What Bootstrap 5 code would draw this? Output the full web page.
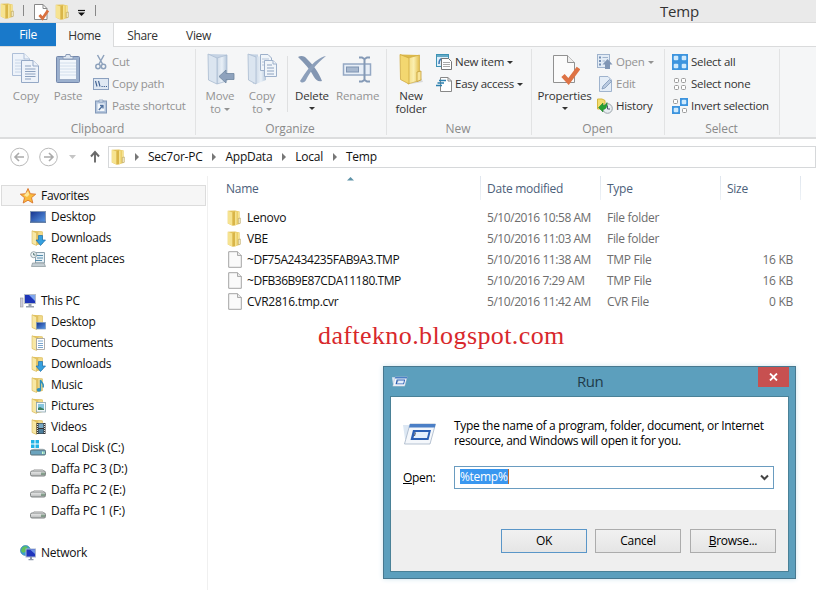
<!DOCTYPE html>
<html lang="en">
<head>
<meta charset="utf-8">
<meta name="viewport" content="width=device-width, initial-scale=1">
<title>Temp</title>
<link href="https://cdn.jsdelivr.net/npm/bootstrap@5.3.0/dist/css/bootstrap.min.css" rel="stylesheet">
<style>
body{width:816px;height:590px;overflow:hidden;background:#fff;color:#111;font:12px/16px "Open Sans","Noto Sans",sans-serif;letter-spacing:-.3px;position:relative;white-space:nowrap}
svg{display:block;flex:none}
.title-bar{height:23px;background:#eaeaea;border-bottom:1px solid #dadada}
.title-text{font-size:15px;line-height:23px;color:#333;margin-left:562px;letter-spacing:-.2px}
.tab-bar{height:24px;border-bottom:1px solid #dadbdc}
.tab-bar .tab-item{font-size:12px;color:#333;line-height:26px;text-align:center;letter-spacing:-.35px}
.tab-bar .tab-file{width:56px;background:#1979ca;color:#fff;line-height:24px;height:23px}
.tab-bar .tab-home{width:58px;height:24px;background:#f5f6f7;border-right:1px solid #dadbdc}
.tab-share{width:57px}.tab-view{width:55px}
.ribbon{height:92px;background:#f5f6f7;border-bottom:2px solid #dcddde}
.grp{border-right:1px solid #e2e3e4;margin:2px 0;height:86px;padding-top:2px;color:#333}
.grp-body{height:70px}
.grp-name{text-align:center;color:#8a8a8a;line-height:16px;padding-right:5px;letter-spacing:-.1px}
.big{padding-top:2px;text-align:center;line-height:13px;font-size:11.5px;letter-spacing:-.15px}
.big svg{margin:0 auto 4px}
.big span{display:block}
.off{color:#939393}
.small-row{height:22px;gap:3px;font-size:11.5px;letter-spacing:-.26px}
.small-row span{margin-top:-1px}
.g-clip{width:196px;padding-left:5px}.g-org{width:191px;padding-left:3px}.g-new{width:145px;padding-left:3px}.g-open{width:133px;padding-left:4px}.g-sel{width:115px;padding-left:7px}
.w42{width:42px}.w46{width:46px}.w48{width:48px}.w57{width:57px}
.in-sep{width:1px;height:56px;background:#dfe0e1;margin:5px 0 0 4px}
.car{display:inline-block;border:3px solid transparent;border-top:3.5px solid currentColor;border-bottom:0;vertical-align:2px;margin-left:3px}
.car-low{display:block;margin:5px auto 0;width:0}
.addr{height:37px;padding:7px 0 0 9px}
.addr-box{border:1px solid #d6d8da;height:22px;width:720px;padding-left:2px}
.addr-box span{margin-left:9px;margin-right:10px;letter-spacing:-.25px}
.crumb-arrow{border:4px solid transparent;border-left:4px solid #777;border-right:0;width:4px}
.main-area{height:414px}
.side{width:208px;border-right:1px solid #f0f0f0;padding-top:9px}
.side-row{height:21px;padding-left:30px;gap:5px}
.side-row span{letter-spacing:-.25px}
.side-top{padding-left:20px}
.side-fav{height:21px;margin:0 1px;background:#f6f6f6;border:1px solid #dcdcdc;padding-left:18px;width:205px;gap:5px}
.list-head{height:24px;color:#4c607a;margin-bottom:7px;letter-spacing:-.25px}
.hc{height:24px;line-height:25px;padding-left:6px;border-right:1px solid;border-image:linear-gradient(#dfe6ee,#eef2f7) 1}
.c-name{width:273px}.c-date,.c-type{width:120px}.c-size{width:80px}
.file-row{height:21px;color:#6d6d6d}
.file-row>div{line-height:21px}
.file-row .c-name{padding-left:19px;gap:4px;color:#111;letter-spacing:-.25px}
.file-row .c-date,.file-row .c-type{padding-left:6px}
.file-row .c-size{width:72px;text-align:right}
.file-row .d-t{letter-spacing:-.45px}
.file-row .n-t{letter-spacing:-.41px}
.sort-mark{left:347px;top:177px}
.brand-mark{left:318px;top:320px;font:26px/32px "Liberation Serif",serif;color:#d8282c;letter-spacing:.4px}
.run-win{left:383px;top:366px;width:413px;height:213px;background:#5c9fbd;border:1px solid #47788f;box-shadow:0 0 5px #cfe4ee}
.run-title{height:29px}
.run-name{font-size:15px;color:#1f3b4a;line-height:29px;width:388px;text-align:center;margin-left:-24px;padding-left:24px;letter-spacing:-.5px}
.run-close{right:6px;top:0;width:31px;height:20px;background:#c75050}
.run-body{margin:0 6px;height:176px;width:399px;border:1px solid #4a8197;background:#fff;color:#000}
.msg{padding:21px 0 0 12px;gap:17px}
.msg svg{margin-top:5px}
.msg p{line-height:15px;letter-spacing:-.33px}
.open-row{padding:18px 0 0 12px}
.open-lbl{width:51px}
.run-foot{height:61px;background:#efefef;padding:19px 12px 0 0;gap:8px}
.run-btn{width:86px;height:24px;line-height:22px;text-align:center;border:1px solid #acacac;background:linear-gradient(#f1f1f1,#e5e5e5)}
.run-btn.def{border-color:#5a96c8}
.run-btn.last-btn{margin-left:1px}
.run-field{width:320px;height:23px;border:1px solid #6a9cc0;padding:0 4px 0 5px}
.sel-text{background:#3997f0;color:#fff;line-height:15px;height:15px;border-right:1px solid #c06a2c;margin-top:-2px}
</style>
</head>
<body>
<svg width="0" height="0" class="position-absolute" aria-hidden="true">
<defs>
<linearGradient id="gy" x1="0" x2="1"><stop offset="0" stop-color="#f3dc84"/><stop offset=".5" stop-color="#fbefb0"/><stop offset="1" stop-color="#e2bd4c"/></linearGradient>
<linearGradient id="gb" x1="0" x2="1"><stop offset="0" stop-color="#cfdbe9"/><stop offset=".5" stop-color="#e9f0f7"/><stop offset="1" stop-color="#b4c6da"/></linearGradient>
<linearGradient id="gs" x1="0" x2="1" y2="1"><stop offset="0" stop-color="#16328c"/><stop offset="1" stop-color="#5b9be8"/></linearGradient>
<linearGradient id="gd" x1="0" x2="0" y2="1"><stop offset="0" stop-color="#eee"/><stop offset="1" stop-color="#b5b8b8"/></linearGradient>
<symbol id="fold" viewBox="0 0 16 16"><path d="M.8.8 8 .5 12.500 1.500V13.500L8 15.500 5 15.500.8 13.500z" fill="#e3c25a"/><path d="M.8.8 5.500 2.500V15.500L.8 13.500z" fill="#f6e391"/><path d="M5.500 2.500 8 1.500V15L5.500 15.500z" fill="#d9b548"/><path d="M8 1.500 12.500 1.500V13.500L8 15.300z" fill="#f5e290"/><path d="M9.500 1.500H11V14L9.500 14.700z" fill="#ecd06c"/><path d="M11.300 8.500 13.300 8V13.300L11.300 14z" fill="#f9f0c9" stroke="#b39c52" stroke-width=".6"/></symbol>
<symbol id="foldb" viewBox="0 0 16 16"><path d="M2 .8 12.500 1.500V14L6 15.300 2 13.500z" fill="#e3c25e"/><path d="M2 .8 6.500 3V15.500L2 13.500z" fill="#f8e8a5" stroke="#d8b95c" stroke-width=".6"/><path d="M8 1.500 12.500 2V13.500H8z" fill="#f1da8a" stroke="#dcbf66" stroke-width=".5"/></symbol>
<symbol id="page" viewBox="0 0 14 17"><path d="M.7.7H9.500L13.300 4.500V16.300H.7z" fill="#fafafa" stroke="#9a9a9a" stroke-width=".9"/><path d="M9.500.7V4.500H13.300" fill="#e8e8e8" stroke="#9a9a9a" stroke-width=".8"/></symbol>
<symbol id="doc2" viewBox="0 0 28 32"><g fill="#eef3fa" stroke="#aebfd8" stroke-width="1"><path d="M.5.5H12L17.500 6V22.500H.5z"/><path d="M12 .5V6H17.500"/><path d="M3 7H14M3 10H14M3 13H10M3 16H10M3 19H10" stroke="#c8d6e8"/><path d="M9.500 7.500H21L26.500 13V29.500H9.500z" stroke="#95a9c6"/><path d="M21 7.500V13H26.500" stroke="#95a9c6"/><path d="M13 13H19M13 16H23.500M13 18.500H23.500M13 21H23.500M13 23.500H23.500M13 26H19" stroke="#8ca1bf"/></g></symbol>
<symbol id="drive" viewBox="0 0 16 16"><path d="M2.500 8.500 4 6.500H12.500L14.500 8.500z" fill="#f4f4f4" stroke="#aaa" stroke-width=".6"/><rect x=".5" y="8" width="15" height="5" rx="1.500" fill="url(#gd)" stroke="#737777" stroke-width=".9"/><path d="M12 9.500V12M14 9.500V12" stroke="#3c6d48"/></symbol>
<symbol id="runic" viewBox="0 0 34 22"><path d="M0 2H8L4 16H2z" fill="#dce7f3"/><path d="M7 1H32.500L27 21H1.500z" fill="#f4f7fb" stroke="#a5b4c6" stroke-width=".8"/><path d="M7 1H32.500L31.800 4.500H6z" fill="#4b7fc6"/><path d="M10 7H28L25.500 17H7.500z" fill="#2c60b4"/><path d="M12 9H25.500L24 15H10.500z" fill="#e5f0fd"/><path d="M12.500 9.500 11.500 13" stroke="#333" stroke-width=".8"/></symbol>
<symbol id="boxon" viewBox="0 0 7 7"><rect width="7" height="7" fill="#3d94de"/><rect x="1.500" y="1.500" width="4" height="4" rx="1" fill="#cfeafd"/></symbol>
<symbol id="boxoff" viewBox="0 0 7 7"><rect x="1.500" y="1.500" width="4" height="4" rx="1" fill="#fff" stroke="#999"/></symbol>
</defs></svg>

<header class="title-bar d-flex">
 <svg width="98" height="22" viewBox="0 0 98 22"><use href="#fold" x="0" y="3" width="16" height="16"/><path d="M23.500 5V16M95.500 5V16" stroke="#888"/><path d="M34.500 4.500H43L47 8.500V19.500H34.500z" fill="#fff" stroke="#888"/><path d="M43 4.500V8.500H47" fill="none" stroke="#888"/><path d="M39.500 15 42.500 18.500 48 10.500" stroke="#d9703f" stroke-width="2.800" fill="none"/><use href="#fold" x="55" y="4" width="16" height="16"/><path d="M78 10.500H85" stroke="#111" stroke-width="1.200"/><path d="M78 12.500H85L81.500 16z" fill="#111"/></svg>
 <div class="title-text">Temp</div>
</header>
<nav class="tab-bar d-flex">
 <div class="tab-item tab-file">File</div><div class="tab-item tab-home">Home</div><div class="tab-item tab-share">Share</div><div class="tab-item tab-view">View</div>
</nav>
<section class="ribbon d-flex">
 <div class="grp g-clip">
  <div class="grp-body d-flex off">
   <div class="big w42"><svg width="28" height="32"><use href="#doc2"/></svg><span>Copy</span></div>
   <div class="big w46 pe-1"><svg width="26" height="32" viewBox="0 0 26 32"><rect x="1.500" y="3.500" width="23" height="26" rx="1" fill="#9bb0ce" stroke="#7387ab"/><rect x="4.500" y="6.500" width="17" height="20" fill="#f3f7fc" stroke="#8195b5" stroke-width=".6"/><path d="M5 10H21M5 13H21M5 16H21M5 19H21M5 22H21" stroke="#d2deec"/><path d="M8 6V3.500H10.500L11 1.500H15L15.500 3.500H18V6z" fill="#dfe7f1" stroke="#8a9cb8"/></svg><span>Paste</span></div>
   <div>
    <div class="small-row d-flex align-items-center"><svg width="16" height="16" viewBox="0 0 16 16" fill="none" stroke="#8ea2bc" stroke-width="1.500"><path d="M4.500 1 9.500 10M11 1 6 10"/><circle cx="5" cy="12.500" r="2.200"/><circle cx="10.500" cy="12.500" r="2.200"/></svg><span>Cut</span></div>
    <div class="small-row d-flex align-items-center"><svg width="16" height="14" viewBox="0 0 16 14"><rect x=".5" y="1.500" width="15" height="11" fill="#dfe8f3" stroke="#8ba0bf"/><path d="M2.500 4 4 9.500M5.500 4 7 9.500" stroke="#3e5f90" stroke-width="1.100"/><path d="M8.500 9.500H14" stroke="#3e5f90" stroke-dasharray="1.200 1"/></svg><span>Copy path</span></div>
    <div class="small-row d-flex align-items-center"><svg width="16" height="15" viewBox="0 0 16 15"><rect x="2.500" y="2" width="11" height="12" fill="#b2c4dc" stroke="#8298b8"/><rect x="4.500" y="4.500" width="7" height="7.500" fill="#f3f7fb"/><path d="M6 1H10V3H6z" fill="#dce5f0" stroke="#8298b8" stroke-width=".7"/><path d="M5.800 11 9.500 7M7 6.500H10V9.500" stroke="#4f719f" stroke-width="1.300" fill="none"/></svg><span>Paste shortcut</span></div>
   </div>
  </div>
  <div class="grp-name">Clipboard</div>
 </div>
 <div class="grp g-org">
  <div class="grp-body d-flex">
   <div class="big w42 off"><svg width="30" height="32" viewBox="0 0 30 32"><path d="M4 1 22 1.500V27L12 31z" fill="#c5d3e4"/><path d="M12 5 22 2V28L12 31z" fill="url(#gb)" stroke="#a7b9d0" stroke-width=".7"/><path d="M3 1 12 5V31L3.500 27z" fill="#dbe5f0" stroke="#aabbd1" stroke-width=".8"/><path d="M14 23.500 21 17V20.500H29V26.500H21V30z" fill="#8ea2bd" stroke="#70869f" stroke-width=".8"/></svg><span>Move</span><span>to<i class="car"></i></span></div>
   <div class="big w42 off"><svg width="32" height="32" viewBox="0 0 32 32"><path d="M3 1 12 1.500V29L7 31z" fill="#c5d3e4"/><path d="M10 4 20 2V27L10 31z" fill="url(#gb)"/><path d="M2 1 10 4V31L2.500 27z" fill="#dbe5f0" stroke="#aabbd1" stroke-width=".8"/><g fill="#f0f5fa" stroke="#9db0ca"><path d="M14.500 1.500H22L25.500 5V17.500H14.500z"/><path d="M16 6H23M16 9H23M16 12H23" stroke="#b5c4d8"/><path d="M18.500 7.500H27L30.500 11V23.500H18.500z"/><path d="M27 7.500V11H30.500"/><path d="M21 12H26M21 15H28M21 18H28M21 21H28" stroke="#8da2bf"/></g></svg><span>Copy</span><span>to<i class="car"></i></span></div>
   <div class="in-sep"></div>
   <div class="big w48"><svg width="32" height="32" viewBox="0 0 32 32"><path d="M2 4C5 2 9 3 11 6C17 12 22 18 26 28C22 29 20 27 18 24C14 16 8 10 2 4z" fill="#8396b2"/><path d="M30 3C24 4 18 9 13 15C9 20 6 25 4 28C6 31 9 29 10 27C14 19 20 11 30 3z" fill="#8c9fba"/></svg><span>Delete</span><i class="car car-low"></i></div>
   <div class="big w42 off"><svg width="30" height="32" viewBox="0 0 30 32"><rect x="1.500" y="11" width="27" height="11" fill="#e7eef7" stroke="#94a8c4" stroke-width="1.500"/><rect x="4.500" y="14" width="12" height="5" fill="#a7b8cf" stroke="#7f94b2"/><path d="M17 4.500H20L22.500 6 25 4.500H28M17 28.500H20L22.500 27 25 28.500H28M22.500 6V27" fill="none" stroke="#8499b6" stroke-width="2"/></svg><span>Rename</span></div>
  </div>
  <div class="grp-name">Organize</div>
 </div>
 <div class="grp g-new">
  <div class="grp-body d-flex">
   <div class="big w42"><svg width="30" height="32" viewBox="0 0 30 32"><path d="M14 31 27 29 25 25z" fill="#bbb" opacity=".5"/><path d="M4 1.500 23 2V27L12 30z" fill="#dcb94a"/><path d="M12 5 23.500 2V27.500L12 31z" fill="url(#gy)" stroke="#cfaa40" stroke-width=".7"/><path d="M4 1.500 13 5V31L4.500 26.500z" fill="#f3d770" stroke="#cfaa40" stroke-width=".8"/><path d="M21 19 25 18V27L21 28.500z" fill="#f8e498" stroke="#c59e36" stroke-width=".8"/></svg><span>New</span><span>folder</span></div>
   <div class="ps-1">
    <div class="small-row d-flex align-items-center"><svg width="16" height="16" viewBox="0 0 16 16"><rect x=".5" y=".5" width="12" height="12" fill="#dff0fa" stroke="#3d93b5"/><path d="M1 2H12" stroke="#3d93b5" stroke-width="1.500"/><path d="M3 10C3 6 4 5 6 4.500" stroke="#3d77b5" fill="none" stroke-width="1.500"/><path d="M5.500 4.500H12.500L15.500 7.500V15.500H5.500z" fill="#fff" stroke="#777"/><path d="M7 8.500H14M7 10.500H14M7 12.500H14" stroke="#aaa"/></svg><span>New item<i class="car"></i></span></div>
    <div class="small-row d-flex align-items-center"><svg width="16" height="16" viewBox="0 0 16 16"><path d="M4.500 1.500H12L15.500 5V15.500H4.500z" fill="#fff" stroke="#888"/><path d="M12 1.500V5H15.500" stroke="#888" fill="none"/><path d="M3 4.500H10M1.500 7H8M0 9.500H6" stroke="#2a7fae" stroke-width="1.300"/></svg><span>Easy access<i class="car"></i></span></div>
   </div>
  </div>
  <div class="grp-name">New</div>
 </div>
 <div class="grp g-open">
  <div class="grp-body d-flex">
   <div class="big w57"><svg width="30" height="32" viewBox="0 0 30 32"><path d="M3.500 2.500H17.500L24.500 9.500V29.500H3.500z" fill="#fbfbfb" stroke="#919191"/><path d="M17.500 2.500V9.500H24.500" fill="#eee" stroke="#919191"/><path d="M13 22.500 18.500 28.500 28.500 15" fill="none" stroke="#de7345" stroke-width="4.500"/></svg><span>Properties</span><i class="car car-low"></i></div>
   <div class="ps-1">
    <div class="small-row d-flex align-items-center off"><svg width="16" height="16" viewBox="0 0 16 16"><rect x=".5" y=".5" width="12" height="13" fill="#e3ecf6" stroke="#9fb3cd"/><path d="M2 3.500H4M2 7H4M2 10.500H4" stroke="#7690b4" stroke-width="2"/><path d="M5.500 3.500H11M5.500 7H8" stroke="#9fb3cd"/><path d="M10.500 5 15.500 10.500H13V15H8V10.500H5.500z" fill="#8096b5"/></svg><span>Open<i class="car ms-1"></i></span></div>
    <div class="small-row d-flex align-items-center off"><svg width="16" height="16" viewBox="0 0 16 16"><path d="M2.500.5H11L14.500 4V15.500H2.500z" fill="#e4edf7" stroke="#9fb3cd"/><path d="M5 13 6 10 12.500 3.500 14.500 5.500 8 12z" fill="#b9cae0" stroke="#7f97b8" stroke-width=".8"/></svg><span>Edit</span></div>
    <div class="small-row d-flex align-items-center"><svg width="16" height="16" viewBox="0 0 16 16"><path d="M.5 1H5L8 2.500V11H.5z" fill="#f3dd6f" stroke="#d6b83e"/><circle cx="10.500" cy="10.500" r="4.800" fill="#e8edf1" stroke="#9aa4aa"/><path d="M10.500 7.500V11H13" stroke="#557" fill="none"/><path d="M1.500 9.500 6 5V7.500C8.500 7.500 9.500 6 10 4.500C10.500 8.500 9 11.500 6 11.500V14z" fill="#27a134" stroke="#157a23" stroke-width=".5"/></svg><span>History</span></div>
   </div>
  </div>
  <div class="grp-name">Open</div>
 </div>
 <div class="grp g-sel">
  <div class="grp-body">
    <div class="small-row d-flex align-items-center"><svg width="16" height="16" viewBox="0 0 16 16"><rect x="1" y="1" width="14" height="14" fill="#7dbcf0"/><use href="#boxon" x="0" y="0" width="8" height="8"/><use href="#boxon" x="8" y="0" width="8" height="8"/><use href="#boxon" x="0" y="8" width="8" height="8"/><use href="#boxon" x="8" y="8" width="8" height="8"/></svg><span>Select all</span></div>
    <div class="small-row d-flex align-items-center"><svg width="16" height="16" viewBox="0 0 16 16"><use href="#boxoff" x="1" y="1" width="7" height="7"/><use href="#boxoff" x="8" y="1" width="7" height="7"/><use href="#boxoff" x="1" y="8" width="7" height="7"/><use href="#boxoff" x="8" y="8" width="7" height="7"/></svg><span>Select none</span></div>
    <div class="small-row d-flex align-items-center"><svg width="16" height="16" viewBox="0 0 16 16"><use href="#boxoff" x="0" y="0" width="7" height="7"/><use href="#boxon" x="8" y="0" width="8" height="8"/><use href="#boxon" x="0" y="8" width="8" height="8"/><use href="#boxoff" x="9" y="9" width="7" height="7"/></svg><span>Invert selection</span></div>
  </div>
  <div class="grp-name pe-2">Select</div>
 </div>
</section>
<div class="addr d-flex">
 <svg width="99" height="22" viewBox="0 0 99 22" fill="none"><circle cx="10.500" cy="11" r="8.800" stroke="#b9b9b9"/><path d="M15 11H6.500M10 7 6 11 10 15" stroke="#aaa" stroke-width="1.600"/><circle cx="39.500" cy="11" r="8.800" stroke="#b9b9b9"/><path d="M35 11H43.500M40 7 44 11 40 15" stroke="#aaa" stroke-width="1.600"/><path d="M60 9H67L63.500 13z" fill="#c5c5c5"/><path d="M86 16.500V6.500M82 10.500 86 6 90 10.500" stroke="#6a6a6a" stroke-width="1.900"/></svg>
 <div class="addr-box d-flex align-items-center"><svg width="16" height="16"><use href="#fold"/></svg><i class="crumb-arrow ms-2"></i><span>Sec7or-PC</span><i class="crumb-arrow"></i><span>AppData</span><i class="crumb-arrow"></i><span>Local</span><i class="crumb-arrow"></i><span>Temp</span></div>
</div>
<main class="main-area d-flex">
 <aside class="side">
  <div class="side-fav d-flex align-items-center"><svg width="16" height="16" viewBox="0 0 16 16"><path d="M8 .5 10.300 5.700 15.700 6.200 11.500 9.700 12.800 15 8 12.200 3.200 15 4.500 9.700.3 6.200 5.700 5.700z" fill="#f9bb3e" stroke="#d9752a" stroke-width=".9"/><path d="M8 3 9.300 6.800 7 9 4 7.200z" fill="#fde79b"/></svg><span>Favorites</span></div>
  <div class="side-row d-flex align-items-center"><svg width="16" height="16" viewBox="0 0 16 16"><rect x=".5" y="2.500" width="15" height="11" fill="url(#gs)" stroke="#8296b4"/><path d="M0 13H16" stroke="#4d6d9c"/></svg><span>Desktop</span></div>
  <div class="side-row d-flex align-items-center"><svg width="16" height="16"><use href="#foldb"/><path d="M8.500 5.500H12.500V10H15.500L10.500 15.500 6 10H8.500z" fill="#35a0df" stroke="#1c6fae" stroke-width=".7"/></svg><span>Downloads</span></div>
  <div class="side-row d-flex align-items-center"><svg width="16" height="16" viewBox="0 0 16 16"><path d="M5.500 1.500H14.500V12H5.500z" fill="#e7f1f7" stroke="#8ba0ac"/><path d="M7 4.500H13M7 7H13M5 9.500H12" stroke="#568eae"/><path d="M2.500 12H14L15.500 15.500H1.500z" fill="#c3cdd2" stroke="#87949a" stroke-width=".7"/><circle cx="3.700" cy="3.700" r="3" fill="#eef3f5" stroke="#96a4aa"/><path d="M3.700 2V4H5.500" fill="none" stroke="#577"/></svg><span>Recent places</span></div>
  <div class="side-row"></div>
  <div class="side-row side-top d-flex align-items-center"><svg width="16" height="16" viewBox="0 0 16 16"><rect x=".5" y="5" width="2.500" height="9" fill="#ccd" stroke="#999" stroke-width=".6"/><rect x="4.500" y="1.500" width="11" height="9" fill="#1e35b8" stroke="#b4bcc9"/><path d="M9 2 15 2V8z" fill="#7fa6ee"/><path d="M8.500 11H11.500V13H14V14.500H6V13H8.500z" fill="#98a1ad"/></svg><span>This PC</span></div>
  <div class="side-row d-flex align-items-center"><svg width="16" height="16"><use href="#foldb"/><rect x="6.500" y="8.500" width="9" height="6.500" fill="url(#gs)" stroke="#7d99b9" stroke-width=".7"/></svg><span>Desktop</span></div>
  <div class="side-row d-flex align-items-center"><svg width="16" height="16"><use href="#foldb"/><path d="M6.500 3.500H14.500V14.500H6.500z" fill="#fff" stroke="#999" stroke-width=".8"/><path d="M8 6H13M8 8.500H13M8 10.500H13M8 12.500H13" stroke="#6b9bc7" stroke-width=".9"/></svg><span>Documents</span></div>
  <div class="side-row d-flex align-items-center"><svg width="16" height="16"><use href="#foldb"/><path d="M8.500 5.500H12.500V10H15.500L10.500 15.500 6 10H8.500z" fill="#35a0df" stroke="#1c6fae" stroke-width=".7"/></svg><span>Downloads</span></div>
  <div class="side-row d-flex align-items-center"><svg width="16" height="16"><use href="#foldb"/><path d="M10.500 12.500V3C11 5.500 14.500 6 13 10.500" fill="none" stroke="#2d8fbd" stroke-width="1.400"/><ellipse cx="9" cy="12.800" rx="2.300" ry="1.900" fill="#2d8fbd"/></svg><span>Music</span></div>
  <div class="side-row d-flex align-items-center"><svg width="16" height="16"><use href="#foldb"/><rect x="6.500" y="4.500" width="9" height="9.500" fill="#f2f8fb" stroke="#8aa3ad" stroke-width=".8"/><rect x="8" y="6" width="6" height="6" fill="#85c5df"/><path d="M8 12V10L10 9 14 11V12z" fill="#3d8061"/></svg><span>Pictures</span></div>
  <div class="side-row d-flex align-items-center"><svg width="16" height="16"><use href="#foldb"/><rect x="6.500" y="4" width="9" height="11" fill="#333"/><rect x="8.500" y="4.500" width="5" height="4.500" fill="#79a8c4"/><rect x="8.500" y="10" width="5" height="4.500" fill="#4d7e9d"/><path d="M7.500 5V15M14.500 5V15" stroke="#ddd" stroke-dasharray="1 1"/></svg><span>Videos</span></div>
  <div class="side-row d-flex align-items-center"><svg width="16" height="16" viewBox="0 0 16 16"><path d="M1 0H4.500V3.500H1zM5.500 0H9V3.500H5.500zM1 4.500H4.500V8H1zM5.500 4.500H9V8H5.500z" fill="#21b3e6"/><path d="M2 10 4 8.500H13L15 10z" fill="#d7dde0"/><rect x=".5" y="10" width="15" height="5" rx="1.200" fill="#6ba3bd" stroke="#587079"/><path d="M12.500 11.500V14M14 11.500V14" stroke="#caffce"/></svg><span>Local Disk (C:)</span></div>
  <div class="side-row d-flex align-items-center"><svg width="16" height="16" class="mt-1"><use href="#drive"/></svg><span>Daffa PC 3 (D:)</span></div>
  <div class="side-row d-flex align-items-center"><svg width="16" height="16" class="mt-1"><use href="#drive"/></svg><span>Daffa PC 2 (E:)</span></div>
  <div class="side-row d-flex align-items-center"><svg width="16" height="16" class="mt-1"><use href="#drive"/></svg><span>Daffa PC 1 (F:)</span></div>
  <div class="side-row"></div>
  <div class="side-row side-top d-flex align-items-center"><svg width="16" height="16" viewBox="0 0 16 16"><circle cx="5.500" cy="5.500" r="5" fill="#3b9fd3" stroke="#2a7aa0" stroke-width=".6"/><path d="M2 3C4 .5 6 1 8 2L6 4 7 6 3 8 1 6z" fill="#5fc05b"/><rect x="6" y="4" width="9.500" height="8" fill="#1f35bd" stroke="#a9b5cb"/><path d="M10 4.500H15V9z" fill="#6f94e8"/><path d="M10 12H12V14H13.500V15.300H8.500V14H10z" fill="#8c98ab"/></svg><span>Network</span></div>
 </aside>
 <section class="flex-fill">
  <div class="list-head d-flex"><div class="hc c-name"><span class="ms-2 ps-1">Name</span></div><div class="hc c-date">Date modified</div><div class="hc c-type">Type</div><div class="hc c-size">Size</div></div>
  <div class="file-row d-flex"><div class="c-name d-flex align-items-center"><svg width="16" height="16"><use href="#fold"/></svg><span>Lenovo</span></div><div class="c-date d-t">5/10/2016 10:58 AM</div><div class="c-type">File folder</div></div>
  <div class="file-row d-flex"><div class="c-name d-flex align-items-center"><svg width="16" height="16"><use href="#fold"/></svg><span>VBE</span></div><div class="c-date d-t">5/10/2016 11:03 AM</div><div class="c-type">File folder</div></div>
  <div class="file-row d-flex"><div class="c-name d-flex align-items-center"><svg width="16" height="17"><use href="#page"/></svg><span class="n-t">~DF75A2434235FAB9A3.TMP</span></div><div class="c-date d-t">5/10/2016 11:38 AM</div><div class="c-type">TMP File</div><div class="c-size">16 KB</div></div>
  <div class="file-row d-flex"><div class="c-name d-flex align-items-center"><svg width="16" height="17"><use href="#page"/></svg><span class="d-t">~DFB36B9E87CDA11180.TMP</span></div><div class="c-date d-t">5/10/2016 7:29 AM</div><div class="c-type">TMP File</div><div class="c-size">16 KB</div></div>
  <div class="file-row d-flex"><div class="c-name d-flex align-items-center"><svg width="16" height="17"><use href="#page"/></svg><span>CVR2816.tmp.cvr</span></div><div class="c-date d-t">5/10/2016 11:42 AM</div><div class="c-type">CVR File</div><div class="c-size">0 KB</div></div>
 </section>
</main>
<svg class="sort-mark position-absolute" width="7" height="4" viewBox="0 0 7 4"><path d="M0 3.500 3.500 0 7 3.500z" fill="#5f93a8"/></svg>
<div class="brand-mark position-absolute">daftekno.blogspot.com</div>

<div class="run-win position-absolute">
 <div class="run-title d-flex align-items-center">
  <svg width="16" height="11" class="ms-2" viewBox="0 0 34 22"><use href="#runic" width="34" height="22"/></svg>
  <div class="run-name">Run</div>
 </div>
 <div class="run-close position-absolute d-flex align-items-center justify-content-center"><svg width="9" height="8" viewBox="0 0 9 8"><path d="M1 .5 8 7.500M8 .5 1 7.500" stroke="#fff" stroke-width="1.800"/></svg></div>
 <div class="run-body d-flex flex-column">
  <div class="d-flex msg"><svg width="34" height="22"><use href="#runic"/></svg><p class="mb-0">Type the name of a program, folder, document, or Internet<br>resource, and Windows will open it for you.</p></div>
  <div class="d-flex align-items-center open-row"><span class="open-lbl"><u>O</u>pen:</span><div class="run-field d-flex align-items-center justify-content-between"><span class="sel-text">%temp%</span><svg width="9" height="7" viewBox="0 0 9 7"><path d="M1 1.500 4.500 5 8 1.500" fill="none" stroke="#444" stroke-width="2"/></svg></div></div>
  <div class="run-foot d-flex justify-content-end mt-auto"><div class="run-btn def">OK</div><div class="run-btn">Cancel</div><div class="run-btn last-btn"><u>B</u>rowse...</div></div>
 </div>
</div>
<script src="https://cdn.jsdelivr.net/npm/bootstrap@5.3.0/dist/js/bootstrap.bundle.min.js"></script>
</body>
</html>
